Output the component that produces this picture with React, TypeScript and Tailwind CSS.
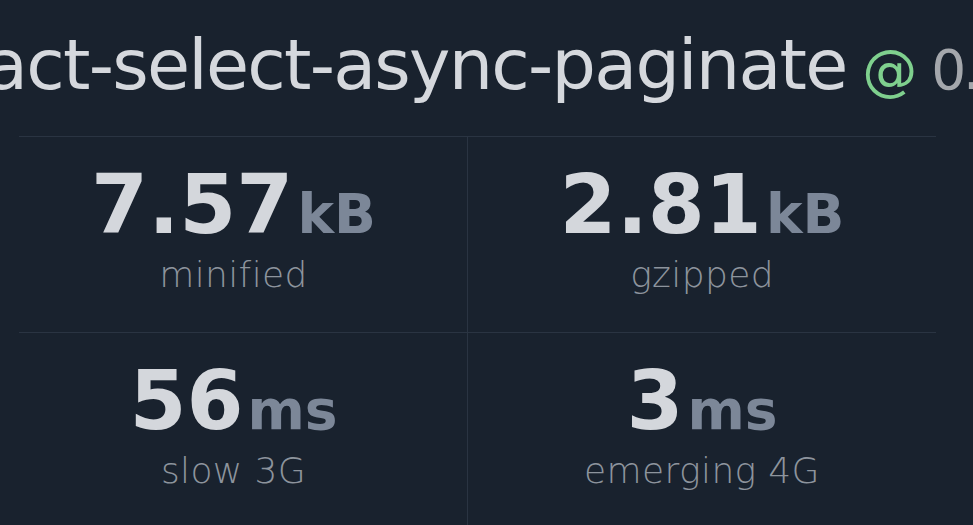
const stats = [
  { value: "7.57", unit: "kB", label: "minified" },
  { value: "2.81", unit: "kB", label: "gzipped" },
  { value: "56", unit: "ms", label: "slow 3G" },
  { value: "3", unit: "ms", label: "emerging 4G" },
];

function Stat({ value, unit, label, first }: { value: string; unit: string; label: string; first: boolean }) {
  return (
    <div className={`flex h-[195px] flex-col items-center pt-[27px] ${first ? "border-r border-[#2a3442]" : ""}`}>
      <div className="flex items-baseline whitespace-nowrap">
        <span className="text-[82px] font-bold leading-[82px] text-[#d4d7dc]">{value}</span>
        <span className="ml-[4px] text-[55px] font-bold leading-none text-[#7c8798]">{unit}</span>
      </div>
      <div className="mt-[7px] font-['DejaVu_Sans_ExtraLight','DejaVu_Sans',sans-serif] text-[36px] font-extralight leading-[43px] tracking-[0.01em] text-[#8d949d]">
        {label}
      </div>
    </div>
  );
}

export default function App() {
  return (
    <main className="h-[525px] w-[973px] overflow-hidden bg-[#19222e] font-['DejaVu_Sans',sans-serif]">
      {/* Package title */}
      <header className="mb-[36px] flex justify-center whitespace-nowrap pt-[30px]">
        <h1 className="text-[70px] font-normal leading-[70px] tracking-[-0.025em] text-[#d5d8dd]">
          react-select-async-paginate
          <span className="text-[55px] leading-none">
            {" "}
            <span className="text-[#7fd08e]">@</span>{" "}
            <span className="tracking-[-0.06em] text-[#a4a7ac]">0.7.3</span>
          </span>
        </h1>
      </header>

      {/* Stats grid */}
      <section className="w-[936px]">
        <div className="ml-[19px] h-px bg-[#2a3442]" />
        <div className="grid grid-cols-2">
          <Stat {...stats[0]} first />
          <Stat {...stats[1]} first={false} />
        </div>
        <div className="ml-[19px] h-px bg-[#2a3442]" />
        <div className="grid grid-cols-2">
          <Stat {...stats[2]} first />
          <Stat {...stats[3]} first={false} />
        </div>
      </section>
    </main>
  );
}
